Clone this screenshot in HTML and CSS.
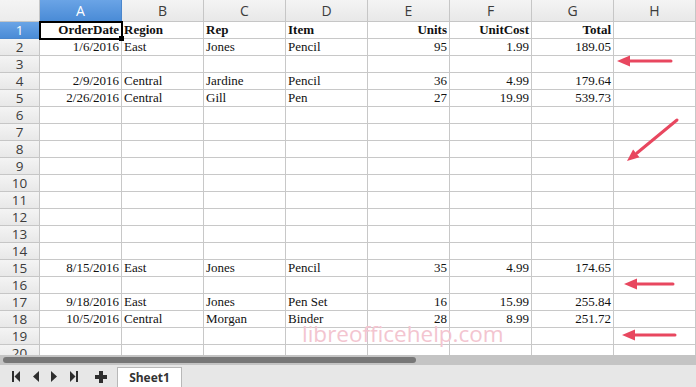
FILE: index.html
```html
<!DOCTYPE html>
<html lang="en">
<head>
    <meta charset="UTF-8">
    <title>Sheet1 - LibreOffice Calc</title>
    <link rel="stylesheet" href="styles.css">
</head>
<body>
<div class="calc">
    <div class="grid">
        <div class="row head">
            <div class="rh corner"></div>
            <div class="ch sel">A</div><div class="ch">B</div><div class="ch">C</div><div class="ch">D</div>
            <div class="ch">E</div><div class="ch">F</div><div class="ch">G</div><div class="ch">H</div>
        </div>
        <div class="row">
            <div class="rh sel">1</div>
            <div class="c r b cursor">OrderDate</div><div class="c b">Region</div><div class="c b">Rep</div><div class="c b">Item</div>
            <div class="c r b">Units</div><div class="c r b">UnitCost</div><div class="c r b">Total</div><div class="c"></div>
        </div>
        <div class="row">
            <div class="rh">2</div>
            <div class="c r">1/6/2016</div><div class="c">East</div><div class="c">Jones</div><div class="c">Pencil</div>
            <div class="c r">95</div><div class="c r">1.99</div><div class="c r">189.05</div><div class="c"></div>
        </div>
        <div class="row">
            <div class="rh">3</div>
            <div class="c"></div><div class="c"></div><div class="c"></div><div class="c"></div>
            <div class="c"></div><div class="c"></div><div class="c"></div><div class="c"></div>
        </div>
        <div class="row">
            <div class="rh">4</div>
            <div class="c r">2/9/2016</div><div class="c">Central</div><div class="c">Jardine</div><div class="c">Pencil</div>
            <div class="c r">36</div><div class="c r">4.99</div><div class="c r">179.64</div><div class="c"></div>
        </div>
        <div class="row">
            <div class="rh">5</div>
            <div class="c r">2/26/2016</div><div class="c">Central</div><div class="c">Gill</div><div class="c">Pen</div>
            <div class="c r">27</div><div class="c r">19.99</div><div class="c r">539.73</div><div class="c"></div>
        </div>
        <div class="row">
            <div class="rh">6</div>
            <div class="c"></div><div class="c"></div><div class="c"></div><div class="c"></div>
            <div class="c"></div><div class="c"></div><div class="c"></div><div class="c"></div>
        </div>
        <div class="row">
            <div class="rh">7</div>
            <div class="c"></div><div class="c"></div><div class="c"></div><div class="c"></div>
            <div class="c"></div><div class="c"></div><div class="c"></div><div class="c"></div>
        </div>
        <div class="row">
            <div class="rh">8</div>
            <div class="c"></div><div class="c"></div><div class="c"></div><div class="c"></div>
            <div class="c"></div><div class="c"></div><div class="c"></div><div class="c"></div>
        </div>
        <div class="row">
            <div class="rh">9</div>
            <div class="c"></div><div class="c"></div><div class="c"></div><div class="c"></div>
            <div class="c"></div><div class="c"></div><div class="c"></div><div class="c"></div>
        </div>
        <div class="row">
            <div class="rh">10</div>
            <div class="c"></div><div class="c"></div><div class="c"></div><div class="c"></div>
            <div class="c"></div><div class="c"></div><div class="c"></div><div class="c"></div>
        </div>
        <div class="row">
            <div class="rh">11</div>
            <div class="c"></div><div class="c"></div><div class="c"></div><div class="c"></div>
            <div class="c"></div><div class="c"></div><div class="c"></div><div class="c"></div>
        </div>
        <div class="row">
            <div class="rh">12</div>
            <div class="c"></div><div class="c"></div><div class="c"></div><div class="c"></div>
            <div class="c"></div><div class="c"></div><div class="c"></div><div class="c"></div>
        </div>
        <div class="row">
            <div class="rh">13</div>
            <div class="c"></div><div class="c"></div><div class="c"></div><div class="c"></div>
            <div class="c"></div><div class="c"></div><div class="c"></div><div class="c"></div>
        </div>
        <div class="row">
            <div class="rh">14</div>
            <div class="c"></div><div class="c"></div><div class="c"></div><div class="c"></div>
            <div class="c"></div><div class="c"></div><div class="c"></div><div class="c"></div>
        </div>
        <div class="row">
            <div class="rh">15</div>
            <div class="c r">8/15/2016</div><div class="c">East</div><div class="c">Jones</div><div class="c">Pencil</div>
            <div class="c r">35</div><div class="c r">4.99</div><div class="c r">174.65</div><div class="c"></div>
        </div>
        <div class="row">
            <div class="rh">16</div>
            <div class="c"></div><div class="c"></div><div class="c"></div><div class="c"></div>
            <div class="c"></div><div class="c"></div><div class="c"></div><div class="c"></div>
        </div>
        <div class="row">
            <div class="rh">17</div>
            <div class="c r">9/18/2016</div><div class="c">East</div><div class="c">Jones</div><div class="c">Pen Set</div>
            <div class="c r">16</div><div class="c r">15.99</div><div class="c r">255.84</div><div class="c"></div>
        </div>
        <div class="row">
            <div class="rh">18</div>
            <div class="c r">10/5/2016</div><div class="c">Central</div><div class="c">Morgan</div><div class="c">Binder</div>
            <div class="c r">28</div><div class="c r">8.99</div><div class="c r">251.72</div><div class="c"></div>
        </div>
        <div class="row">
            <div class="rh">19</div>
            <div class="c"></div><div class="c"></div><div class="c"></div><div class="c"></div>
            <div class="c"></div><div class="c"></div><div class="c"></div><div class="c"></div>
        </div>
        <div class="row">
            <div class="rh">20</div>
            <div class="c"></div><div class="c"></div><div class="c"></div><div class="c"></div>
            <div class="c"></div><div class="c"></div><div class="c"></div><div class="c"></div>
        </div>

        <div class="watermark">libreofficehelp.com</div>

        <!-- red arrows pointing at the blank rows -->
        <svg class="arrows" width="696" height="355" viewBox="0 0 696 355">
            <g stroke="#e8475f" stroke-width="3" stroke-linecap="round" fill="#e8475f">
                <line x1="671" y1="61" x2="628" y2="61"/>
                <polygon points="617,61 630,55.5 630,66.5" stroke="none"/>
                <line x1="677" y1="120" x2="637" y2="153"/>
                <polygon points="627,161 639.5,157.3 633.1,149.5" stroke="none"/>
                <line x1="673" y1="284" x2="635" y2="284"/>
                <polygon points="624,284 637,278.5 637,289.5" stroke="none"/>
                <line x1="675" y1="335" x2="633" y2="335"/>
                <polygon points="622,335 635,329.5 635,340.5" stroke="none"/>
            </g>
        </svg>
    </div>

    <div class="hscroll"><div class="thumb"></div></div>

    <div class="tabbar">
        <svg class="nav first" width="8" height="11" viewBox="0 0 8 11"><rect x="0" y="0" width="2" height="11"/><polygon points="8,0 2.5,5.5 8,11"/></svg>
        <svg class="nav prev" width="6" height="11" viewBox="0 0 6 11"><polygon points="6,0 0,5.5 6,11"/></svg>
        <svg class="nav next" width="6" height="11" viewBox="0 0 6 11"><polygon points="0,0 6,5.5 0,11"/></svg>
        <svg class="nav last" width="8" height="11" viewBox="0 0 8 11"><polygon points="0,0 5.5,5.5 0,11"/><rect x="6" y="0" width="2" height="11"/></svg>
        <svg class="nav plus" width="12" height="12" viewBox="0 0 12 12"><rect x="4" y="0" width="4" height="12"/><rect x="0" y="4" width="12" height="4"/></svg>
        <div class="tab">Sheet1</div>
    </div>
</div>
</body>
</html>
```

FILE: styles.css
```css
html, body {
    margin: 0;
    padding: 0;
    background-color: #fff;
}
.calc {
    width: 696px;
    height: 387px;
    overflow: hidden;
    display: flex;
    flex-direction: column;
}
.grid {
    position: relative;
    height: 355px;
    overflow: hidden;
    flex: none;
}
.row {
    display: grid;
    grid-template-columns: 40px repeat(8, 82px);
    height: 17px;
}
.row.head {
    height: 22px;
}
.rh, .ch {
    box-sizing: border-box;
    border-right: 1px solid #c6c6c6;
    border-bottom: 1px solid #c6c6c6;
    background: linear-gradient(#f4f4f4, #e8e8e8);
    color: #3c3c3c;
    font-family: "Open Sans", sans-serif;
    text-align: center;
}
.ch {
    font-size: 14px;
    line-height: 21px;
}
.rh {
    font-size: 13.5px;
    line-height: 16px;
}
.rh.sel, .ch.sel {
    background: linear-gradient(#6aa4e6, #4a8bd6);
    color: #fff;
    border-color: #4a86cc;
}
.corner {
    background: linear-gradient(#f4f4f4, #ececec);
}
.c {
    box-sizing: border-box;
    border-right: 1px solid #c8c8c8;
    border-bottom: 1px solid #c8c8c8;
    font-family: "Liberation Serif", serif;
    font-size: 13px;
    line-height: 16px;
    color: #111;
    padding: 0 2px;
    white-space: nowrap;
    overflow: visible;
}
.c.r {
    text-align: right;
}
.c.b {
    font-weight: bold;
}
.cursor {
    position: relative;
    outline: 2px solid #000;
    outline-offset: -1px;
}
.cursor::after {
    content: "";
    position: absolute;
    right: -3px;
    bottom: -3px;
    width: 5px;
    height: 5px;
    background: #000;
}
.watermark {
    position: absolute;
    left: 302px;
    top: 318px;
    font-family: "Open Sans", sans-serif;
    font-size: 22.5px;
    color: #f3c5d0;
    pointer-events: none;
}
.arrows {
    position: absolute;
    left: 0;
    top: 0;
    pointer-events: none;
}
.hscroll {
    height: 10px;
    background-color: #c4c4c4;
    padding: 2px 0 2px 3px;
    box-sizing: border-box;
    flex: none;
}
.thumb {
    width: 413px;
    height: 6px;
    border-radius: 3px;
    background-color: #777;
}
.tabbar {
    flex: 1;
    background-color: #e7e7e7;
    display: flex;
    align-items: flex-end;
    padding-left: 12px;
}
.nav {
    fill: #2e2e2e;
    margin-bottom: 5px;
}
.prev {
    margin-left: 13px;
}
.next {
    margin-left: 12px;
}
.last {
    margin-left: 13px;
}
.plus {
    margin-left: 17px;
    margin-bottom: 4px;
}
.tab {
    margin-left: 10px;
    width: 65px;
    height: 20px;
    box-sizing: border-box;
    background-color: #fff;
    border: 1px solid #b8b8b8;
    border-bottom: none;
    font-family: "Open Sans", sans-serif;
    font-weight: bold;
    font-size: 12px;
    line-height: 19px;
    text-align: center;
    color: #333;
}
```
